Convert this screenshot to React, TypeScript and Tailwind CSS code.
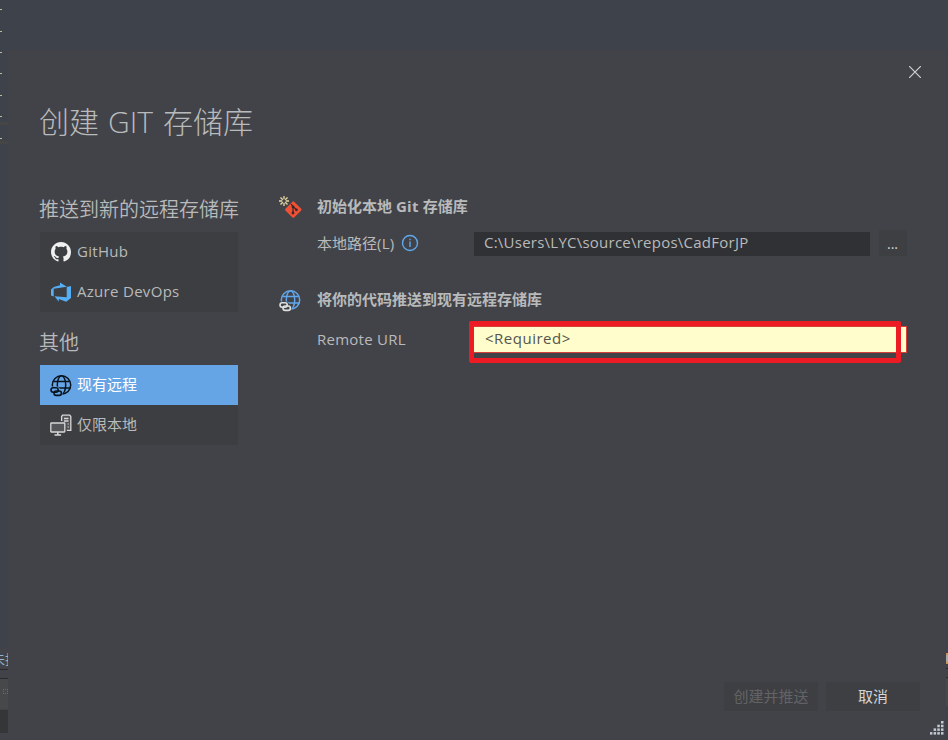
import type { ReactNode } from 'react'

const ticks = [9, 31, 52, 73, 95, 116, 138]

function GitHubIcon() {
  return (
    <svg width="20" height="20" viewBox="0 0 16 16" fill="#f0f0f0">
      <path d="M8 0C3.58 0 0 3.58 0 8c0 3.54 2.29 6.53 5.47 7.59.4.07.55-.17.55-.38 0-.19-.01-.82-.01-1.49-2.01.37-2.53-.49-2.69-.94-.09-.23-.48-.94-.82-1.13-.28-.15-.68-.52-.01-.53.63-.01 1.08.58 1.23.82.72 1.21 1.87.87 2.33.66.07-.52.28-.87.51-1.07-1.78-.2-3.64-.89-3.64-3.95 0-.87.31-1.59.82-2.15-.08-.2-.36-1.02.08-2.12 0 0 .67-.21 2.2.82.64-.18 1.32-.27 2-.27s1.36.09 2 .27c1.53-1.04 2.2-.82 2.2-.82.44 1.1.16 1.92.08 2.12.51.56.82 1.27.82 2.15 0 3.07-1.87 3.75-3.65 3.95.29.25.54.73.54 1.48 0 1.07-.01 1.93-.01 2.2 0 .21.15.46.55.38A8.01 8.01 0 0 0 16 8c0-4.42-3.58-8-8-8z" />
    </svg>
  )
}

function AzureIcon() {
  return (
    <svg width="20" height="20" viewBox="0 0 20 20" fill="#56aef5">
      <path d="M20 4v12l-4.800 3.800-7.400-2.700v2.700l-4.300-5.500 12.200.9V4.900zM15.800 4.800 9 .5v2.700L2.800 5 0 7.400v6l2.700 1.200V6.800z" />
    </svg>
  )
}

function GlobeIcon({ globe, link, mask }: { globe: string; link: string; mask: string }) {
  return (
    <svg width="22" height="22" viewBox="0 0 22 22" fill="none">
      <g stroke={globe} strokeWidth="1.500">
        <circle cx="11.500" cy="10" r="9.200" />
        <ellipse cx="11.500" cy="10" rx="4.200" ry="9.200" />
        <path d="M3.200 6.500h16.600M2.500 13h18" />
      </g>
      <path d="M0 11.500h7.500l5 4.500v6H0z" fill={mask} />
      <g stroke={link} strokeWidth="1.600">
        <rect x="1" y="12.800" width="7.200" height="4.400" rx="2.200" />
        <rect x="4" y="16" width="7.400" height="4.400" rx="2.200" />
      </g>
    </svg>
  )
}

function ComputerIcon() {
  return (
    <svg width="22" height="22" viewBox="0 0 22 22" fill="none" stroke="#d8d8d8" strokeWidth="1.300">
      <path d="M11.600 7V2.500l1-1.300h7.200l1 1.300v13.800h-4" fill="#505154" />
      <path d="M14 4.500h4.500M14 7h4.500" />
      <path d="M17.500 10h1.500M17.500 13h1.500" stroke="#a5a5a5" />
      <rect x=".8" y="9" width="14" height="9" rx=".5" fill="#55565a" />
      <path d="M7.800 18v3M4.500 21h6.600" strokeWidth="1.500" />
    </svg>
  )
}

function GitIcon() {
  return (
    <svg width="24" height="24" viewBox="0 0 24 24" fill="none">
      <path d="M13.500 5.700q.8-.8 1.600 0l7.100 7.100q.8.8 0 1.600l-7.100 7.100q-.8.8-1.600 0l-7.100-7.100q-.8-.8 0-1.600z" fill="#f05033" />
      <path d="m12 8 2 2.500V17M14 10.500l3.500 3.200" stroke="#35262a" strokeWidth="1.200" />
      <circle cx="14" cy="10.800" r="1.400" fill="#35262a" />
      <circle cx="14" cy="17" r="1.400" fill="#35262a" />
      <circle cx="17.400" cy="13.800" r="1.400" fill="#35262a" />
      <path d="M5 0v3.300M5 6.700V10M0 5h3.300M6.700 5H10M1.500 1.500l2.300 2.300M6.200 6.200l2.300 2.300M8.500 1.500 6.200 3.800M3.800 6.200 1.500 8.500" stroke="#ecdca4" strokeWidth="1.300" />
    </svg>
  )
}

function NavItem({ icon, selected, children }: { icon: ReactNode; selected?: boolean; children: ReactNode }) {
  return (
    <li className={selected ? 'flex h-10 items-center bg-[#65a5e6] pl-[10px] text-white' : 'flex h-10 items-center pl-[10px]'}>
      <span className="flex w-[27px] shrink-0">{icon}</span>
      <span className="pb-[2px] tracking-[0.3px]">{children}</span>
    </li>
  )
}

function Sidebar() {
  return (
    <nav className="w-[200px] shrink-0">
      <h2 className="-ml-px h-[41px] whitespace-nowrap pt-[2px] text-[20px] leading-[34px] font-[350]">推送到新的远程存储库</h2>
      <ul className="w-[198px] bg-[#3d3e41]">
        <NavItem icon={<span className="pl-px"><GitHubIcon /></span>}>GitHub</NavItem>
        <NavItem icon={<span className="pl-px"><AzureIcon /></span>}>Azure DevOps</NavItem>
      </ul>
      <h2 className="-ml-px h-[53px] pt-[14px] text-[20px] leading-[34px] font-[350]">其他</h2>
      <ul className="w-[198px] bg-[#3d3e41]">
        <NavItem selected icon={<span className="pt-[2px]"><GlobeIcon globe="#08131f" link="#08131f" mask="#65a5e6" /></span>}>
          <span className="tracking-normal">现有远程</span>
        </NavItem>
        <NavItem icon={<ComputerIcon />}>
          <span className="tracking-normal">仅限本地</span>
        </NavItem>
      </ul>
    </nav>
  )
}

function RepoForm() {
  return (
    <section className="ml-[38px] w-[629px] shrink-0">
      <div className="mb-[10px] flex h-[29px] items-center">
        <span className="w-[39px] pl-px pt-[5px]"><GitIcon /></span>
        <h3 className="font-bold leading-5">初始化本地 <span className="tracking-[0.3px]">Git</span> 存储库</h3>
      </div>
      <div className="flex h-[26px] items-center">
        <div className="ml-[39px] flex w-[157px] items-center gap-[7px] pb-px">
          <label className="leading-5">本地路径<span className="tracking-[0.2px]">(L)</span></label>
          <svg width="18" height="18" viewBox="0 0 18 18" fill="none" stroke="#5fa8ec" strokeWidth="1.400">
            <circle cx="9" cy="9" r="7.500" />
            <path d="M9 7.500V13M9 4.700v1.500" />
          </svg>
        </div>
        <div className="mt-[2px] flex h-6 w-[396px] items-center bg-[#303134] pl-[10px]">
          <span className="pb-[3px] tracking-[0.24px]">C:\Users\LYC\source\repos\CadForJP</span>
        </div>
        <button className="ml-[9px] h-[26px] w-7 bg-[#3e3f42] pr-px text-[14px] text-[#d5d5d5]">...</button>
      </div>
      <div className="mt-[30px] flex h-[28px] items-center">
        <span className="w-[39px] pl-px pt-[2px]"><GlobeIcon globe="#61a6eb" link="#e0e0e0" mask="#424348" /></span>
        <h3 className="pb-[2px] font-bold leading-5">将你的代码推送到现有远程存储库</h3>
      </div>
      <div className="mt-[12px] flex h-[27px] items-center">
        <label className="ml-[39px] w-[156px] tracking-[0.25px]">Remote URL</label>
        <div className="relative h-[27px] w-[434px] border border-[#d64038] bg-[#fefdcb] pl-[11px] leading-[23px] text-[#555550]">
          <span className="tracking-[0.5px]">&lt;Required&gt;</span>
          <div className="absolute -left-[5px] -top-[6px] h-[42px] w-[432px] rounded-[2px] border-[5px] border-[#ed1c24]" />
        </div>
      </div>
    </section>
  )
}

function ResizeGrip() {
  const dots = [0, 1, 2, 3].flatMap((row) => Array.from({ length: row + 1 }, (_, i) => ({ x: 11 - i * 3.7, y: row * 3.7 })))
  return (
    <svg className="absolute right-[2px] top-[671px]" width="14" height="14" fill="#c5cbd3">
      {dots.map((d) => (
        <rect key={`${d.x}-${d.y}`} x={d.x} y={d.y} width="2.500" height="2.500" />
      ))}
    </svg>
  )
}

export default function App() {
  return (
    <div className="h-[740px] w-[948px] overflow-hidden bg-[#3e424b] font-['Open_Sans','Noto_Sans_CJK_SC',sans-serif] text-[15px] text-[#b9babb]">
      <div className="h-[50px]" />
      <div className="flex h-[690px]">
        <aside className="relative w-2 shrink-0 overflow-hidden">
          <div className="absolute top-[72px] h-[3px] w-2 bg-[#464744]" />
          <div className="absolute top-[91px] h-[3px] w-2 bg-[#464744]" />
          <div className="absolute bottom-0 h-[92px] w-2 bg-[#424348]" />
          <span className="absolute -left-[8px] top-[601px] whitespace-nowrap text-[13px] leading-4 text-[#8fb4d6]">未找</span>
          <div className="absolute top-[619px] h-[10px] w-2 border-y border-[#292a2d]" />
          <div className="absolute top-[629px] h-[30px] w-2 bg-[#46484a]" />
          <div className="absolute left-[3px] top-[639px] size-[5px] border border-dotted border-[#6a6c6e]" />
          <div className="absolute top-[660px] h-[23px] w-2 bg-[#353638]" />
        </aside>
        <main className="relative w-[938px] shrink-0 bg-[#424348]">
          <div className="flex h-[44px] justify-end pr-[25px] pt-[16px]">
            <svg width="12" height="12" viewBox="0 0 12 12" stroke="#d0d0d0" strokeWidth="1.200">
              <path d="m0 0 12 12M12 0 0 12" />
            </svg>
          </div>
          <h1 className="ml-[31px] flex h-[97px] whitespace-nowrap text-[30px] leading-[56px] font-light">
            创建<span className="ml-[9px] mr-[10px]">GIT</span>存储库
          </h1>
          <div className="flex pl-8">
            <Sidebar />
            <RepoForm />
          </div>
          <footer className="mt-[237px] flex justify-end gap-2 pr-[26px] text-[15px]">
            <button className="h-[29px] w-[94px] bg-[#3e3f42] text-[#626366]">创建并推送</button>
            <button className="h-[29px] w-[94px] bg-[#3e3f42] text-[#d5d5d5]">取消</button>
          </footer>
          <ResizeGrip />
        </main>
        <div className="w-0.5 shrink-0 pt-[603px]">
          <div className="h-[11px] border-y-2 border-[#c99152] bg-[#a9a9a5]" />
          <div className="mt-[4px] h-[10px] border-y border-[#292a2d] bg-[#424348]" />
          <div className="h-[28px] bg-[#46484a]" />
        </div>
      </div>
      {ticks.map((y) => (
        <div key={y} className="absolute left-0 h-px w-0.5 bg-[#c3b9a0]" style={{ top: y }} />
      ))}
    </div>
  )
}
